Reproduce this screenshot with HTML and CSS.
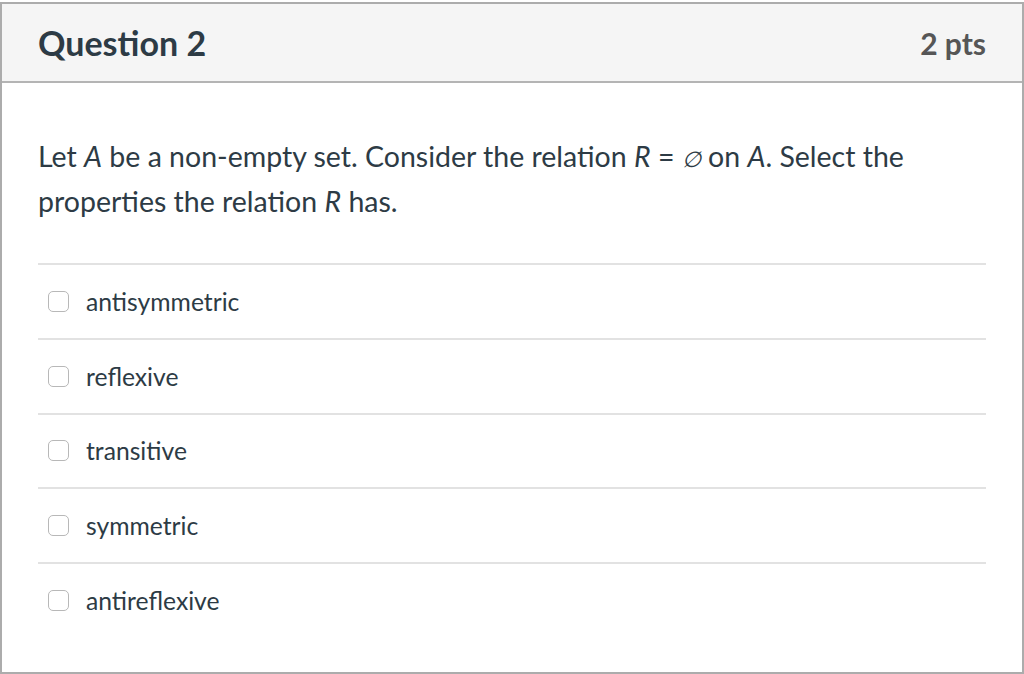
FILE: index.html
```html
<!DOCTYPE html>
<html>
<head>
<meta charset="utf-8">
<link rel="stylesheet" href="styles.css">
</head>
<body>
<div class="card">
  <div class="header">
    <h2 class="title">Question 2</h2>
    <span class="pts">2 pts</span>
  </div>
  <div class="content">
    <p class="question">Let <i>A</i> be a non-empty set. Consider the relation <i>R</i> = <span class="empty">∅</span> on <i>A</i>. Select the properties the relation <i>R</i> has.</p>
    <ul class="answers">
      <li class="answer"><span class="box"></span><span class="label">antisymmetric</span></li>
      <li class="answer"><span class="box"></span><span class="label">reflexive</span></li>
      <li class="answer"><span class="box"></span><span class="label">transitive</span></li>
      <li class="answer"><span class="box"></span><span class="label">symmetric</span></li>
      <li class="answer"><span class="box"></span><span class="label">antireflexive</span></li>
    </ul>
  </div>
</div>
</body>
</html>
```

FILE: styles.css
```css
html, body {
  margin: 0;
  padding: 0;
  background: #fff;
}
body {
  font-family: Lato, "Noto Sans", sans-serif;
  color: #2d3b45;
  padding-top: 2px;
}
.card {
  width: 1024px;
  height: 672px;
  box-sizing: border-box;
  border: 2px solid #acacac;
  display: flex;
  flex-direction: column;
}
.header {
  height: 77px;
  background: #f5f5f5;
  border-bottom: 2px solid #b4b4b4;
  display: flex;
  align-items: center;
  justify-content: space-between;
  padding: 0 36px;
}
.title {
  margin: 0;
  font-size: 34px;
  font-weight: 700;
  color: #2d3b45;
}
.pts {
  font-size: 30px;
  font-weight: 700;
  color: #565656;
}
.content {
  padding: 52px 36px 0;
}
.question {
  margin: 0 0 40px;
  font-size: 28.5px;
  line-height: 43px;
}
.empty {
  font-size: 22px;
  font-style: italic;
}
.answers {
  list-style: none;
  margin: 0;
  padding: 0;
}
.answer {
  border-top: 2px solid #e2e2e2;
  height: 72.8px;
  display: flex;
  align-items: center;
  padding-left: 10px;
}
.box {
  width: 21px;
  height: 21px;
  border: 1.5px solid #b8b8b8;
  border-radius: 5px;
  margin-right: 17px;
  box-sizing: border-box;
}
.label {
  font-size: 24.7px;
}
```
